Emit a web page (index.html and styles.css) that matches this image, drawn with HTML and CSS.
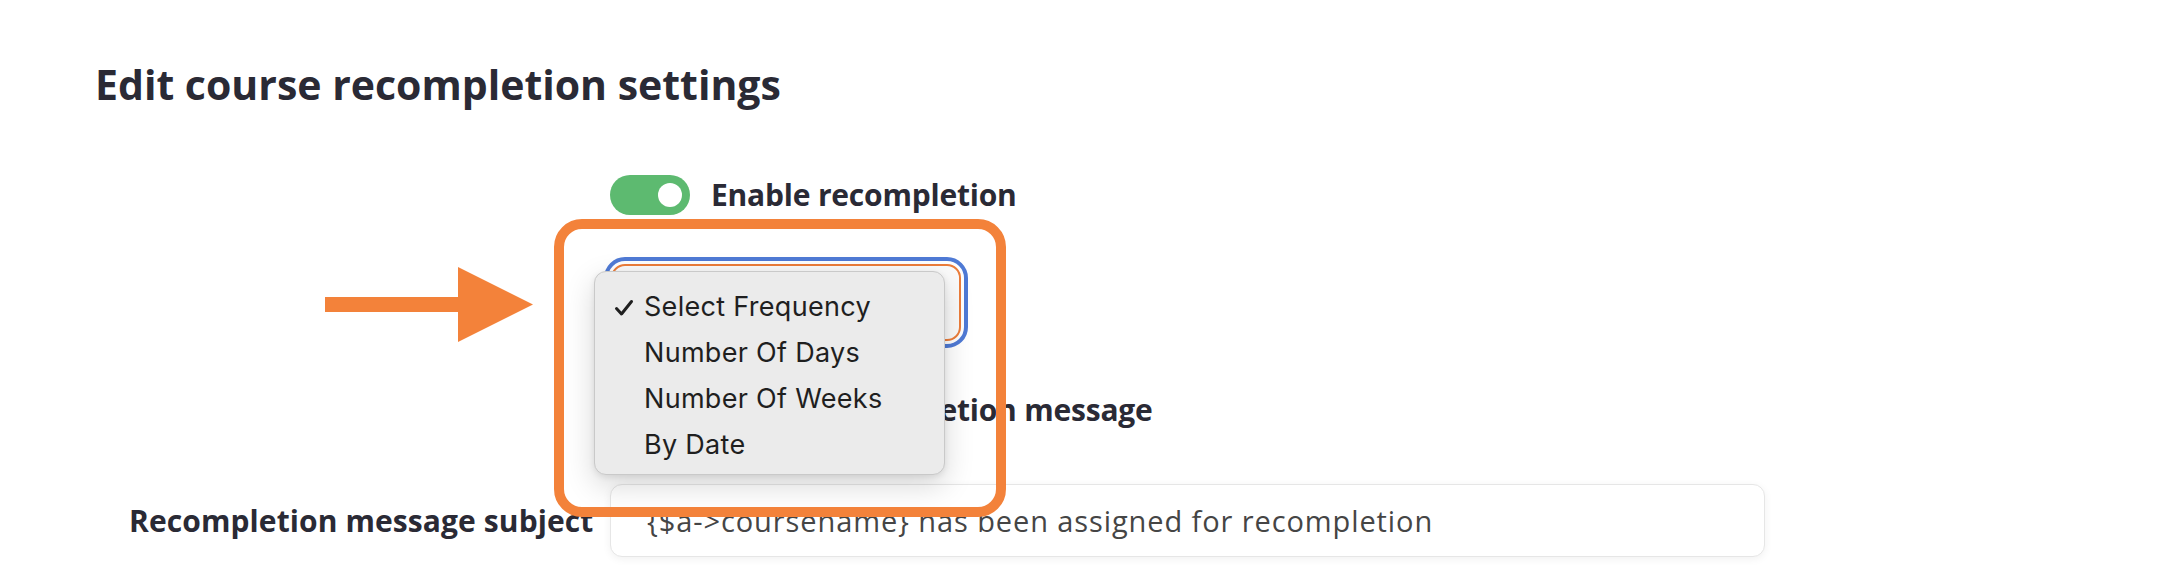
FILE: index.html
```html
<!DOCTYPE html>
<html lang="en">
<head>
<meta charset="utf-8">
<title>Edit course recompletion settings</title>
<link rel="stylesheet" href="styles.css">
</head>
<body>
<div class="page">
  <h2 class="page-title">Edit course recompletion settings</h2>

  <form class="settings-form">
    <div class="form-row">
      <div class="form-label"></div>
      <div class="form-control toggle-field">
        <span class="switch is-on"><span class="switch-knob"></span></span>
        <span class="toggle-label">Enable recompletion</span>
      </div>
    </div>

    <div class="form-row">
      <div class="form-label"></div>
      <div class="form-control">
        <div class="select-wrap">
          <div class="select-box is-focused"></div>
          <ul class="select-menu">
            <li class="menu-item is-checked">
              <svg class="check" viewBox="0 0 20 18" width="20" height="18"><path d="M2.5 9.5 L7.5 15 L17.5 2.5" fill="none" stroke="#1f1f1f" stroke-width="3" stroke-linecap="round" stroke-linejoin="round"/></svg>
              Select Frequency
            </li>
            <li class="menu-item">Number Of Days</li>
            <li class="menu-item">Number Of Weeks</li>
            <li class="menu-item">By Date</li>
          </ul>
        </div>
      </div>
    </div>

    <div class="form-row">
      <div class="form-label"></div>
      <div class="form-control toggle-field">
        <span class="switch is-on"><span class="switch-knob"></span></span>
        <span class="toggle-label">Enable recompletion message</span>
      </div>
    </div>

    <div class="form-row subject-row">
      <label class="form-label field-label" for="subject">Recompletion message subject</label>
      <div class="form-control">
        <div class="text-input" id="subject">{$a-&gt;coursename} has been assigned for recompletion</div>
      </div>
    </div>
  </form>

  <div class="callout-box"></div>
  <svg class="callout-arrow" viewBox="0 0 208 75" width="208" height="75">
    <rect x="0" y="30" width="136" height="15" fill="#f3823a"/>
    <polygon points="133,0 208,37.5 133,75" fill="#f3823a"/>
  </svg>
</div>
</body>
</html>
```

FILE: styles.css
```css
html, body {
  margin: 0;
  padding: 0;
  background: #ffffff;
}

.page {
  position: relative;
  min-height: 575px;
  padding: 60px 0 0 95px;
  box-sizing: border-box;
  font-family: "Open Sans", "Liberation Sans", sans-serif;
  color: #2a2a35;
}

.page-title {
  margin: 0;
  font-size: 41px;
  line-height: 48px;
  font-weight: 700;
  letter-spacing: 0;
}

.settings-form {
  margin: 67px 0 0 34px;
  display: flex;
  flex-direction: column;
  gap: 49px;
}

.form-row {
  display: grid;
  grid-template-columns: 481px 1155px;
  align-items: center;
}

.subject-row {
  margin-top: 5px;
}

.field-label {
  font-size: 30px;
  line-height: 40px;
  font-weight: 700;
  letter-spacing: 0.1px;
}

/* toggle switch */
.toggle-field {
  display: flex;
  align-items: center;
  gap: 21px;
}

.switch {
  width: 80px;
  height: 40px;
  border-radius: 20px;
  background: #5dba70;
  display: flex;
  align-items: center;
  justify-content: flex-end;
  padding: 0 8px;
  box-sizing: border-box;
}

.switch-knob {
  width: 24px;
  height: 24px;
  border-radius: 50%;
  background: #ffffff;
}

.toggle-label {
  font-size: 30px;
  line-height: 40px;
  font-weight: 700;
  letter-spacing: -0.2px;
}

/* select with open menu */
.select-wrap {
  position: relative;
  width: 350px;
  margin-left: 1px;
}

.select-box {
  height: 77px;
  border: 2px solid #ec7d3b;
  border-radius: 14px;
  background: #fbfbfb;
  box-sizing: border-box;
}

.select-box.is-focused {
  outline: 4px solid #4f7ad5;
  outline-offset: 3px;
}

.select-menu {
  position: absolute;
  left: -17px;
  top: 7px;
  width: 351px;
  margin: 0;
  padding: 12px 0 6px;
  list-style: none;
  box-sizing: border-box;
  background: #ebebeb;
  border: 1px solid #c9c9c9;
  border-radius: 12px;
  box-shadow: 0 10px 30px rgba(0, 0, 0, 0.16), 0 2px 6px rgba(0, 0, 0, 0.08);
  font-family: "Inter", "Liberation Sans", sans-serif;
  font-size: 27px;
  line-height: 46px;
  letter-spacing: 0.3px;
  color: #1f1f1f;
}

.menu-item {
  position: relative;
  padding-left: 49px;
  white-space: nowrap;
}

.check {
  position: absolute;
  left: 19px;
  top: 15px;
}

/* text input */
.text-input {
  height: 73px;
  box-sizing: border-box;
  border: 1px solid #e6e6e6;
  border-radius: 12px;
  background: #ffffff;
  box-shadow: 0 2px 8px rgba(0, 0, 0, 0.06);
  padding: 0 0 0 36px;
  font-size: 29px;
  line-height: 71px;
  letter-spacing: 0.9px;
  color: #454545;
  white-space: nowrap;
}

/* annotation overlay */
.callout-box {
  position: absolute;
  left: 554px;
  top: 219px;
  width: 452px;
  height: 298px;
  box-sizing: border-box;
  border: 10px solid #f3823a;
  border-radius: 28px;
  pointer-events: none;
}

.callout-arrow {
  position: absolute;
  left: 325px;
  top: 267px;
}
```
